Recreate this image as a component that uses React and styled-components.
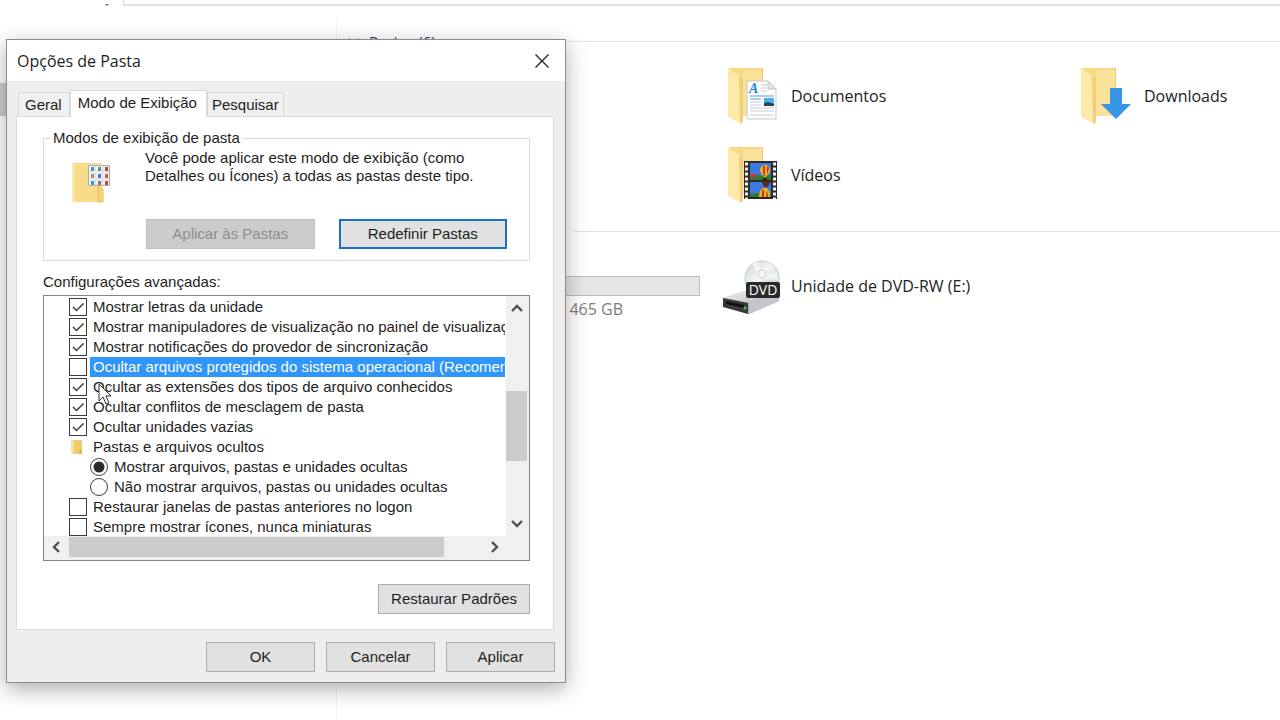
import { useState } from "react";
import styled, { createGlobalStyle, css } from "styled-components";

const GlobalStyle = createGlobalStyle`
  * {
    box-sizing: border-box;
  }
  body {
    margin: 0;
    background: #fff;
    overflow: hidden;
  }
`;

const uiFont = css`
  font-family: "Open Sans", "Noto Sans", sans-serif;
`;

const dialogFont = css`
  font-family: "Liberation Sans", Arial, sans-serif;
  font-size: 15px;
  line-height: 18px;
`;

/* ---------- Explorer ---------- */

const Explorer = styled.div`
  ${uiFont}
  position: relative;
  display: flex;
  flex-direction: column;
  min-height: 100vh;
  font-size: 16px;
  color: #222;
  overflow: hidden;
`;

const AddressRow = styled.div`
  display: flex;
  height: 6px;
`;

const NavArea = styled.div`
  width: 123px;
  padding-left: 104px;
  line-height: 0;
`;

const AddressBar = styled.div`
  flex: 1;
  border-left: 1px solid #d9d9d9;
  border-bottom: 2px solid #e2e2e2;
`;

const ExplorerBody = styled.div`
  flex: 1;
  display: flex;
  padding-top: 12px;
`;

const Sidebar = styled.nav`
  flex: none;
  width: 337px;
  padding-top: 65px;
  border-right: 1px solid #f3f3f3;
`;

const SidebarSelected = styled.div`
  height: 33px;
  background: #cdcdcd;
`;

const Content = styled.main`
  flex: 1;
  min-width: 0;
  padding-top: 12px;
`;

const SectionTitle = styled.h2`
  display: flex;
  align-items: center;
  gap: 8px;
  height: 22px;
  margin: 0;
  padding-left: ${(p) => p.$inset || 10}px;
  font-size: 15px;
  font-weight: 400;
  line-height: 20px;
  color: #26347d;
  white-space: nowrap;

  &::after {
    content: "";
    flex: 1;
    height: 1px;
    margin-left: ${(p) => (p.$inset ? 0 : 24)}px;
    background: #e2e2e2;
  }
`;

const Tiles = styled.div`
  display: grid;
  grid-template-columns: repeat(3, 353px);
  grid-auto-rows: 79px;
  padding: 4px 0 0 37px;
  height: ${(p) => p.$height}px;
`;

const Tile = styled.div`
  grid-column: ${(p) => p.$col};
  grid-row: ${(p) => p.$row};
  display: flex;
  align-items: center;
  gap: 10px;
`;

const TileIcon = styled.span`
  display: flex;
  flex: none;
  justify-content: flex-end;
  width: 54px;

  svg {
    flex: none;
  }
`;

const DriveInfo = styled.div`
  grid-column: 1;
  padding: 30px 27px 0 62px;
  color: #7d7d7d;
  font-size: 16px;
  line-height: 26px;
  text-align: right;
`;

const CapacityBar = styled.div`
  height: 20px;
  border: 1px solid #bdbdbd;
  background: #e6e6e6;
`;

const Capacity = styled.div`
  padding-right: 77px;
`;

/* ---------- Dialog ---------- */

const Dialog = styled.section`
  ${dialogFont}
  position: absolute;
  left: 6px;
  top: 39px;
  width: 560px;
  color: #1e1e1e;
  background: #eee;
  border: 1px solid #8c8c8c;
  box-shadow: 0 6px 20px rgba(0, 0, 0, 0.32);
`;

const TitleBar = styled.header`
  display: flex;
  align-items: center;
  justify-content: space-between;
  height: 41px;
  padding: 0 14px 0 10px;
  background: #fff;
`;

const Title = styled.h1`
  ${uiFont}
  margin: 0;
  font-size: 16px;
  font-weight: 400;
`;

const CloseButton = styled.button`
  display: flex;
  padding: 0;
  border: 0;
  background: none;
  color: #222;
`;

const DialogBody = styled.div`
  padding: 9px 11px 10px 9px;
`;

const TabList = styled.div`
  display: flex;
  align-items: flex-end;
  padding-left: 2px;
`;

const Tab = styled.button`
  ${dialogFont}
  height: ${(p) => (p.$active ? 27 : 24)}px;
  margin-bottom: ${(p) => (p.$active ? -1 : 0)}px;
  padding: ${(p) => (p.$active ? "0 9px 2px 7px" : "0 4px")};
  border: 1px solid #d9d9d9;
  border-bottom: 0;
  background: ${(p) => (p.$active ? "#fff" : "#f0f0f0")};
  color: inherit;
  white-space: nowrap;

  &:first-child {
    padding: 0 7px 0 6px;
  }
`;

const TabPanel = styled.div`
  padding: 12px 23px 15px 26px;
  border: 1px solid #dcdcdc;
  background: #fff;
`;

const Group = styled.fieldset`
  min-width: 0;
  margin: 0;
  padding: 2px 22px 11px 27px;
  border: 1px solid #dcdcdc;

  legend {
    margin-left: -19px;
    padding: 0 2px 0 1px;
  }
`;

const GroupTop = styled.div`
  display: flex;
  gap: 34px;

  svg {
    flex: none;
    margin-top: 12px;
  }

  p {
    margin: 0;
  }
`;

const GroupButtons = styled.div`
  display: grid;
  grid-template-columns: 1fr 1fr;
  gap: 24px;
  padding: 16px 0 0 75px;
`;

const Button = styled.button`
  ${dialogFont}
  height: 30px;
  padding: 0 12px;
  border: 1px solid #adadad;
  background: #e1e1e1;
  color: #1e1e1e;
  white-space: nowrap;

  &:disabled {
    border-color: #bfbfbf;
    background: #cccccc;
    color: #8d8d8d;
  }

  ${(p) =>
    p.$focused &&
    css`
      border: 2px solid #1b6fc8;
    `}
`;

const ListLabel = styled.div`
  margin: 12px 0 4px;
`;

const ListBox = styled.div`
  display: grid;
  grid-template-columns: minmax(0, 1fr) 23px;
  grid-template-rows: 240px 24px;
  border: 1px solid #82828a;
  background: #f0f0f0;
`;

const List = styled.ul`
  margin: 0;
  padding: 1px 0 0 25px;
  border-right: 1px solid #fff;
  list-style: none;
  overflow: hidden;
  background: #fff;
`;

const Item = styled.li`
  display: flex;
  height: 20px;
  padding-left: ${(p) => (p.$nested ? 21 : 0)}px;
`;

const ItemLabel = styled.label`
  display: flex;
  align-items: center;
  gap: 3px;
  white-space: nowrap;
`;

const ItemText = styled.span`
  height: 20px;
  padding: 0 3px;
  line-height: 20px;
  color: ${(p) => (p.$selected ? "#fff" : "inherit")};
  background: ${(p) => (p.$selected ? "#3096fa" : "transparent")};
`;

const Mark = styled.span`
  display: grid;
  flex: none;
  width: 18px;
  height: 18px;

  input,
  svg {
    grid-area: 1 / 1;
    width: 18px;
    height: 18px;
    margin: 0;
  }

  input {
    appearance: none;
    border: 1px solid #3c3c3c;
    background: #fff;
  }

  input[type="radio"] {
    border-radius: 50%;
  }

  svg {
    pointer-events: none;
    visibility: hidden;
  }

  input:checked + svg {
    visibility: visible;
  }
`;

const ScrollBar = styled.div`
  display: flex;
  flex-direction: ${(p) => (p.$vertical ? "column" : "row")};
  padding: ${(p) => (p.$vertical ? "0 2px 0 0" : "1px 0 3px")};
`;

const ArrowButton = styled.button`
  display: flex;
  flex: none;
  align-items: center;
  justify-content: center;
  width: ${(p) => (p.$vertical ? "100%" : "25px")};
  height: ${(p) => (p.$vertical ? "26px" : "100%")};
  padding: 0;
  border: 0;
  background: #f0f0f0;
  color: #505050;
`;

const Track = styled.div`
  flex: 1;
  display: flex;
  flex-direction: ${(p) => (p.$vertical ? "column" : "row")};
  padding: ${(p) => (p.$vertical ? "69px 0 0" : "0")};
`;

const Thumb = styled.div`
  flex: 0 0 ${(p) => p.$length};
  background: #cbcbcb;
`;

const RestoreRow = styled.div`
  display: flex;
  justify-content: flex-end;
  padding-top: 23px;
`;

const Footer = styled.footer`
  display: flex;
  justify-content: flex-end;
  gap: 11px;
  padding-top: 12px;
  margin-right: -1px;

  button {
    width: 109px;
  }
`;

const Pointer = styled.svg`
  position: absolute;
  left: 98px;
  top: 383px;
  pointer-events: none;
`;

/* ---------- Icons ---------- */

function FolderBack() {
  return (
    <>
      <path d="M2 2H36V50H16Z" fill="#f8d984" />
      <path d="M16 4H36V50H16Z" fill="#fae29a" />
      <path d="M35 2h1v48h-1z" fill="#eecb6c" />
      <path d="M1 2L15 12V58L1 51Z" fill="#fde9a8" />
      <path d="M12 10L16 13V56L13 58Z" fill="#f0d07c" />
    </>
  );
}

function DocumentsIcon() {
  return (
    <svg width="54" height="60" viewBox="0 0 54 60">
      <FolderBack />
      <path d="M20 15H41L49 23V53H20Z" fill="#fdfdfd" stroke="#c9c9c9" />
      <path d="M41 15V23H49Z" fill="#e6e6e6" stroke="#c4c4c4" />
      <text x="22" y="27" fontFamily="Liberation Serif, serif" fontSize="14" fontWeight="700" fontStyle="italic" fill="#1f8ad2">
        A
      </text>
      <path d="M34 19h6M34 22h6M34 25h6M23 36h11M23 39h11M23 45h24M23 49h24M23 42h24" stroke="#c9cdd2" />
      <path d="M23 30h24M23 33h11" stroke="#55a2dc" />
      <path d="M37 32h10v8H37z" fill="#4fb0e8" />
      <path d="M37 37l4-1 6 2v2H37z" fill="#24445d" />
    </svg>
  );
}

function DownloadsIcon() {
  return (
    <svg width="54" height="60" viewBox="0 0 54 60">
      <FolderBack />
      <path d="M30 22H42V38H51L36 53L21 38H30Z" fill="#3695e6" />
    </svg>
  );
}

function Balloon({ x, y }) {
  return (
    <g transform={`translate(${x} ${y})`}>
      <path d="M0 5a5 5 0 0 1 10 0c0 3-3 5-4 7H4C3 10 0 8 0 5Z" fill="#f2b21b" />
      <path d="M3 1h2v10H4C3 8 3 5 3 1ZM7 1l2 2-2 7Z" fill="#c8301f" />
      <path d="M3 13h4v3H3z" fill="#3a1c10" />
    </g>
  );
}

function VideosIcon() {
  return (
    <svg width="54" height="60" viewBox="0 0 54 60">
      <FolderBack />
      <path d="M17 16H50V54H17Z" fill="#2b2b2b" />
      <path d="M19.5 17.500V54M47.500 17.500V54" stroke="#f4f4f4" strokeWidth="3" strokeDasharray="3 2" />
      <path d="M23 18h21v17H23zM23 37h21v15H23z" fill="#3f78e0" />
      <path d="M23 30l6-1 5 2 10-1v5H23zM23 49l9-1 12 1v3H23z" fill="#2a7c2c" />
      <path d="M23 29h5l3 3h-8z" fill="#d8323c" />
      <Balloon x={33} y={20} />
      <path d="M35 37h8l-2 5h-4z" fill="#5a2a1c" />
      <path d="M32 52c0-5 2-9 6-9s5 4 5 9z" fill="#f2b21b" />
      <path d="M35 45h2v7h-2zM40 45l1 7h-2z" fill="#c8301f" />
    </svg>
  );
}

function DvdIcon() {
  return (
    <svg width="60" height="60" viewBox="0 0 60 60">
      <defs>
        <linearGradient id="disc" x1="0" y1="0" x2="1" y2="1">
          <stop offset="0" stopColor="#c9cfd0" />
          <stop offset="0.45" stopColor="#f3f6f5" />
          <stop offset="0.7" stopColor="#d7dedb" />
          <stop offset="1" stopColor="#b9bfc1" />
        </linearGradient>
        <linearGradient id="drive" x1="0" y1="0" x2="1" y2="1">
          <stop offset="0" stopColor="#f1f1f4" />
          <stop offset="1" stopColor="#b9b9c0" />
        </linearGradient>
      </defs>
      <path d="M3 42L27 34H58V45L28 58L3 51Z" fill="#a9a9af" />
      <path d="M3 42L27 34H58L28 47Z" fill="url(#drive)" />
      <path d="M28 47L58 35V45L28 58Z" fill="#c4c4cb" />
      <path d="M2 42L27 47V58L2 51Z" fill="#3a3a3c" />
      <path d="M5 45L23 49V52L5 48Z" fill="#111" />
      <circle cx="24" cy="52" r="1.500" fill="#38c75b" />
      <circle cx="41" cy="22" r="17" fill="url(#disc)" stroke="#c3c8c9" />
      <path d="M41 22L30 8L37 5ZM41 22L56 16L57 24Z" fill="#fff" opacity="0.6" />
      <circle cx="41" cy="18" r="4" fill="#f8f8f8" stroke="#ccc" />
      <rect x="25" y="26" width="34" height="16" rx="2" fill="#2a2a2c" />
      <text x="42" y="39" textAnchor="middle" fontFamily="Open Sans, sans-serif" fontSize="14" fill="#fff">
        DVD
      </text>
    </svg>
  );
}

function FolderViewIcon() {
  const cells = [0, 1, 2].flatMap((row) => [0, 1, 2].map((col) => [col, row]));
  const colors = ["#4b93c8", "#5c9a68", "#cf4136", "#b89248", "#4d79c4", "#cf5a3a", "#4b93c8", "#96764c", "#cf4136"];
  return (
    <svg width="40" height="42" viewBox="0 0 40 42">
      <path d="M1 2H30V41H1Z" fill="#f9dc87" />
      <path d="M1 2H4V41H1Z" fill="#fce8a8" />
      <path d="M27 25l5 3V41H27Z" fill="#f6d274" stroke="#e6bf5e" />
      <path d="M17.500 4.500H38.500V24.500H17.500Z" fill="#f2f5f8" stroke="#a6adb5" />
      {cells.map(([col, row], i) => (
        <g key={i}>
          <rect x={18 + col * 7} y={5 + row * 7} width="6" height="5" fill="#fff" stroke="#b5c3d0" strokeWidth="0.500" />
          <rect x={20 + col * 7} y={6 + row * 7} width="3" height="4" fill={colors[i]} />
        </g>
      ))}
    </svg>
  );
}

function SmallFolderIcon() {
  return (
    <svg width="18" height="18" viewBox="0 0 18 18">
      <path d="M3 2H13V16H3Z" fill="#f2cb6a" />
      <path d="M2 2L5 3V16L2 15Z" fill="#fbe2a0" />
      <path d="M10 11l3 1v4h-3z" fill="#e6b94e" />
    </svg>
  );
}

const chevrons = {
  up: "M2 9L7 4L12 9",
  down: "M2 5L7 10L12 5",
  left: "M9 2L4 7L9 12",
  right: "M5 2L10 7L5 12",
};

function Chevron({ dir }) {
  return (
    <svg width="14" height="14" viewBox="0 0 14 14" fill="none" stroke="currentColor" strokeWidth="2.400">
      <path d={chevrons[dir]} />
    </svg>
  );
}

/* ---------- Data ---------- */

const settings = [
  { id: "letras", type: "checkbox", text: "Mostrar letras da unidade", on: true },
  { id: "manip", type: "checkbox", text: "Mostrar manipuladores de visualização no painel de visualização", on: true },
  { id: "notif", type: "checkbox", text: "Mostrar notificações do provedor de sincronização", on: true },
  { id: "proteg", type: "checkbox", text: "Ocultar arquivos protegidos do sistema operacional (Recomendado)", on: false },
  { id: "ext", type: "checkbox", text: "Ocultar as extensões dos tipos de arquivo conhecidos", on: true },
  { id: "confl", type: "checkbox", text: "Ocultar conflitos de mesclagem de pasta", on: true },
  { id: "vazias", type: "checkbox", text: "Ocultar unidades vazias", on: true },
  { id: "grupo", type: "folder", text: "Pastas e arquivos ocultos" },
  { id: "mostrar", type: "radio", text: "Mostrar arquivos, pastas e unidades ocultas", on: true },
  { id: "nao", type: "radio", text: "Não mostrar arquivos, pastas ou unidades ocultas", on: false },
  { id: "janelas", type: "checkbox", text: "Restaurar janelas de pastas anteriores no logon", on: false },
  { id: "icones", type: "checkbox", text: "Sempre mostrar ícones, nunca miniaturas", on: false },
];

function Setting({ item, selected, onSelect }) {
  if (item.type === "folder") {
    return (
      <Item>
        <ItemLabel as="div">
          <SmallFolderIcon />
          <ItemText>{item.text}</ItemText>
        </ItemLabel>
      </Item>
    );
  }
  const radio = item.type === "radio";
  return (
    <Item $nested={radio}>
      <ItemLabel htmlFor={item.id}>
        <Mark>
          <input
            id={item.id}
            type={item.type}
            name={radio ? "ocultos" : item.id}
            defaultChecked={item.on}
            onChange={() => onSelect(item.id)}
          />
          <svg viewBox="0 0 18 18">
            {radio ? (
              <circle cx="9" cy="9" r="5.500" fill="#2b2b2b" />
            ) : (
              <path d="M4 9L7.500 12.500L14.500 5.500" fill="none" stroke="#3c3c3c" strokeWidth="1.500" />
            )}
          </svg>
        </Mark>
        <ItemText $selected={selected}>{item.text}</ItemText>
      </ItemLabel>
    </Item>
  );
}

function FolderOptions() {
  const [selected, setSelected] = useState("proteg");
  return (
    <Dialog role="dialog" aria-labelledby="titulo">
      <TitleBar>
        <Title id="titulo">Opções de Pasta</Title>
        <CloseButton aria-label="Fechar">
          <svg width="18" height="18" viewBox="0 0 18 18" stroke="currentColor" strokeWidth="1.300">
            <path d="M2.500 2.500L15.500 15.500M15.500 2.500L2.500 15.500" />
          </svg>
        </CloseButton>
      </TitleBar>
      <DialogBody>
        <TabList role="tablist">
          <Tab role="tab">Geral</Tab>
          <Tab role="tab" aria-selected="true" $active>
            Modo de Exibição
          </Tab>
          <Tab role="tab">Pesquisar</Tab>
        </TabList>
        <TabPanel role="tabpanel">
          <Group>
            <legend>Modos de exibição de pasta</legend>
            <GroupTop>
              <FolderViewIcon />
              <p>
                Você pode aplicar este modo de exibição (como
                <br />
                Detalhes ou Ícones) a todas as pastas deste tipo.
              </p>
            </GroupTop>
            <GroupButtons>
              <Button disabled>Aplicar às Pastas</Button>
              <Button $focused>Redefinir Pastas</Button>
            </GroupButtons>
          </Group>
          <ListLabel id="avancadas">Configurações avançadas:</ListLabel>
          <ListBox>
            <List aria-labelledby="avancadas">
              {settings.map((item) => (
                <Setting key={item.id} item={item} selected={selected === item.id} onSelect={setSelected} />
              ))}
            </List>
            <ScrollBar $vertical>
              <ArrowButton $vertical aria-label="Rolar para cima">
                <Chevron dir="up" />
              </ArrowButton>
              <Track $vertical>
                <Thumb $length="70px" />
              </Track>
              <ArrowButton $vertical aria-label="Rolar para baixo">
                <Chevron dir="down" />
              </ArrowButton>
            </ScrollBar>
            <ScrollBar>
              <ArrowButton aria-label="Rolar para a esquerda">
                <Chevron dir="left" />
              </ArrowButton>
              <Track>
                <Thumb $length="91%" />
              </Track>
              <ArrowButton aria-label="Rolar para a direita">
                <Chevron dir="right" />
              </ArrowButton>
            </ScrollBar>
          </ListBox>
          <RestoreRow>
            <Button>Restaurar Padrões</Button>
          </RestoreRow>
        </TabPanel>
        <Footer>
          <Button>OK</Button>
          <Button>Cancelar</Button>
          <Button>Aplicar</Button>
        </Footer>
      </DialogBody>
    </Dialog>
  );
}

export default function App() {
  return (
    <>
      <GlobalStyle />
      <Explorer>
        <AddressRow>
          <NavArea>
            <svg width="6" height="2" viewBox="0 0 6 2">
              <path d="M1 0H5L3 2Z" fill="#666" />
            </svg>
          </NavArea>
          <AddressBar />
        </AddressRow>
        <ExplorerBody>
          <Sidebar>
            <SidebarSelected />
          </Sidebar>
          <Content>
            <SectionTitle>
              <Chevron dir="down" />
              Pastas (6)
            </SectionTitle>
            <Tiles $height={168}>
              <Tile $col={2} $row={1}>
                <TileIcon>
                  <DocumentsIcon />
                </TileIcon>
                Documentos
              </Tile>
              <Tile $col={3} $row={1}>
                <TileIcon>
                  <DownloadsIcon />
                </TileIcon>
                Downloads
              </Tile>
              <Tile $col={2} $row={2}>
                <TileIcon>
                  <VideosIcon />
                </TileIcon>
                Vídeos
              </Tile>
            </Tiles>
            <SectionTitle as="div" $inset={237} />
            <Tiles $height={100}>
              <DriveInfo>
                <CapacityBar />
                <Capacity>465 GB</Capacity>
              </DriveInfo>
              <Tile $col={2} $row={1}>
                <TileIcon>
                  <DvdIcon />
                </TileIcon>
                Unidade de DVD-RW (E:)
              </Tile>
            </Tiles>
          </Content>
        </ExplorerBody>
        <FolderOptions />
        <Pointer width="16" height="24" viewBox="0 0 16 24">
          <path d="M1 1V18L5 14L8 21L11 20L8 13H13Z" fill="#fff" stroke="#333" />
        </Pointer>
      </Explorer>
    </>
  );
}
